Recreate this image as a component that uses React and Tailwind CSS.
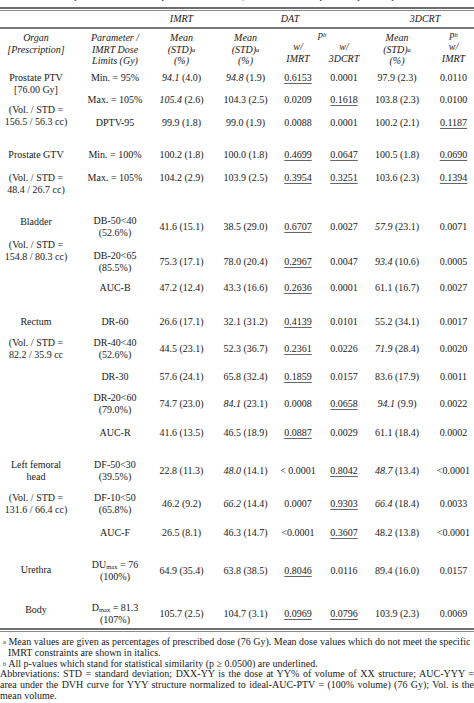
import React from 'react';

// Column classes for the seven value columns (after the organ column).
// Small paddings nudge each column's centre to where the printed table has it.
const COLS = [
  'w-[84px] pl-[2px]',
  'w-[56px] pr-[5px]',
  'w-[64px] pl-[3px]',
  'w-[44px]',
  'w-[48px]',
  'w-[58px]',
  'w-[48px] pl-[7px]',
];

// "*94.1* (4.0)" -> italic mean, "_0.6153_" -> underlined p-value
function fmt(v) {
  if (typeof v !== 'string') return v;
  if (v.startsWith('_')) {
    return (
      <span className="underline decoration-[#666] decoration-[1px] underline-offset-[2px]">
        {v.slice(1, -1)}
      </span>
    );
  }
  const m = v.match(/^\*(.+?)\*(.*)$/);
  if (m) {
    return (
      <>
        <i>{m[1]}</i>
        {m[2]}
      </>
    );
  }
  return v;
}

function Row({ cells, two, mt = '' }) {
  return (
    <div className={`flex ${two ? 'h-[24px]' : 'h-[12px]'} ${mt}`}>
      {cells.map((c, i) => (
        <div
          key={i}
          className={`${COLS[i]} flex items-center justify-center text-center whitespace-nowrap`}
        >
          <div className="leading-[12px]">{fmt(c)}</div>
        </div>
      ))}
    </div>
  );
}

function Group({ organ, rows, mt }) {
  return (
    <div className={`flex ${mt}`}>
      <div className="w-[72px] flex flex-col items-center text-center leading-[12px] whitespace-nowrap">
        {organ}
      </div>
      <div className="flex flex-col">
        {rows.map((r, i) => (
          <Row key={i} {...r} />
        ))}
      </div>
    </div>
  );
}

const two = (a, b) => (
  <>
    {a}
    <br />
    {b}
  </>
);

const Sup = ({ children }) => <sup className="text-[6.5px] relative -top-[1px]">{children}</sup>;
const Sub = ({ children }) => <sub className="text-[6.5px] relative top-[1px]">{children}</sub>;

export default function App() {
  return (
    <div className="w-[474px] h-[703px] overflow-hidden bg-white text-[#1a1a1a] text-[10px] font-['Liberation_Serif','Times_New_Roman',serif]">
      {/* caption line, mostly above the crop: only descenders show */}
      <div className="h-[4px] overflow-hidden">
        <div className="-mt-[10px] leading-[12px] pl-[20px] whitespace-nowrap">
          Table 3. Comparison of dosimetric parameters of IMRT, DAT and 3DCRT plans for prostate patients.
        </div>
      </div>

      {/* top double rule */}
      <div className="mt-[3px] h-[2px] bg-[#6e6e6e]" />
      <div className="mt-[1px] h-[1px] bg-[#8a8a8a]" />

      {/* technique header */}
      <div className="flex h-[16px] items-center italic leading-[12px]">
        <div className="w-[156px]" />
        <div className="w-[56px] pr-[5px] text-center">IMRT</div>
        <div className="w-[156px] text-center">DAT</div>
        <div className="w-[106px] pl-[8px] text-center">3DCRT</div>
      </div>
      <div className="h-[2px] bg-[#7a7a7a]" />

      {/* column header */}
      <div className="flex h-[37px] italic text-center whitespace-nowrap">
        <div className="w-[72px] pt-[3px] leading-[11.5px]">
          Organ
          <br />
          [Prescription]
        </div>
        <div className="w-[84px] pl-[2px] pt-[3px] leading-[11.5px]">
          Parameter /
          <br />
          IMRT Dose
          <br />
          Limits (Gy)
        </div>
        <div className="w-[56px] pr-[5px] pt-[3px] leading-[11.5px]">
          Mean
          <br />
          (STD)<Sup>a</Sup>
          <br />
          (%)
        </div>
        <div className="w-[64px] pl-[3px] pt-[3px] leading-[11.5px]">
          Mean
          <br />
          (STD)<Sup>a</Sup>
          <br />
          (%)
        </div>
        <div className="w-[92px] flex flex-col leading-[12px]">
          <div>
            p<Sup>b</Sup>
          </div>
          <div className="flex">
            <div className="w-[44px]">
              w/
              <br />
              IMRT
            </div>
            <div className="w-[48px]">
              w/
              <br />
              3DCRT
            </div>
          </div>
        </div>
        <div className="w-[58px] pt-[3px] leading-[11.5px]">
          Mean
          <br />
          (STD)<Sup>a</Sup>
          <br />
          (%)
        </div>
        <div className="w-[48px] pl-[7px] leading-[12px]">
          p<Sup>b</Sup>
          <br />
          w/
          <br />
          IMRT
        </div>
      </div>

      <Group
        mt="mt-[6px]"
        organ={
          <>
            <div>{two('Prostate PTV', '[76.00 Gy]')}</div>
            <div className="mt-[8px]">{two('(Vol. / STD =', '156.5 / 56.3 cc)')}</div>
          </>
        }
        rows={[
          { cells: ['Min. = 95%', '*94.1* (4.0)', '*94.8* (1.9)', '_0.6153_', '0.0001', '97.9 (2.3)', '0.0110'] },
          { mt: 'mt-[10px]', cells: ['Max. = 105%', '*105.4* (2.6)', '104.3 (2.5)', '0.0209', '_0.1618_', '103.8 (2.3)', '0.0100'] },
          { mt: 'mt-[11px]', cells: ['DPTV-95', '99.9 (1.8)', '99.0 (1.9)', '0.0088', '0.0001', '100.2 (2.1)', '_0.1187_'] },
        ]}
      />

      <Group
        mt="mt-[20px]"
        organ={
          <>
            <div>Prostate GTV</div>
            <div className="mt-[11px]">{two('(Vol. / STD =', '48.4 / 26.7 cc)')}</div>
          </>
        }
        rows={[
          { cells: ['Min. = 100%', '100.2 (1.8)', '100.0 (1.8)', '_0.4699_', '_0.0647_', '100.5 (1.8)', '_0.0690_'] },
          { mt: 'mt-[11px]', cells: ['Max. = 105%', '104.2 (2.9)', '103.9 (2.5)', '_0.3954_', '_0.3251_', '103.6 (2.3)', '_0.1394_'] },
        ]}
      />

      <Group
        mt="mt-[19px]"
        organ={
          <>
            <div className="mt-[1px]">Bladder</div>
            <div className="mt-[11px]">{two('(Vol. / STD =', '154.8 / 80.3 cc)')}</div>
          </>
        }
        rows={[
          { two: true, cells: [two('DB-50<40', '(52.6%)'), '41.6 (15.1)', '38.5 (29.0)', '_0.6707_', '0.0027', '*57.9* (23.1)', '0.0071'] },
          { two: true, mt: 'mt-[11px]', cells: [two('DB-20<65', '(85.5%)'), '75.3 (17.1)', '78.0 (20.4)', '_0.2967_', '0.0047', '*93.4* (10.6)', '0.0005'] },
          { mt: 'mt-[8px]', cells: ['AUC-B', '47.2 (12.4)', '43.3 (16.6)', '_0.2636_', '0.0001', '61.1 (16.7)', '0.0027'] },
        ]}
      />

      <Group
        mt="mt-[22px]"
        organ={
          <>
            <div>Rectum</div>
            <div className="mt-[9px]">{two('(Vol. / STD =', '82.2 / 35.9 cc')}</div>
          </>
        }
        rows={[
          { cells: ['DR-60', '26.6 (17.1)', '32.1 (31.2)', '_0.4139_', '0.0101', '55.2 (34.1)', '0.0017'] },
          { two: true, mt: 'mt-[9px]', cells: [two('DR-40<40', '(52.6%)'), '44.5 (23.1)', '52.3 (36.7)', '_0.2361_', '0.0226', '*71.9* (28.4)', '0.0020'] },
          { mt: 'mt-[10px]', cells: ['DR-30', '57.6 (24.1)', '65.8 (32.4)', '_0.1859_', '0.0157', '83.6 (17.9)', '0.0011'] },
          { two: true, mt: 'mt-[9px]', cells: [two('DR-20<60', '(79.0%)'), '74.7 (23.0)', '*84.1* (23.1)', '0.0008', '_0.0658_', '*94.1* (9.9)', '0.0022'] },
          { mt: 'mt-[11px]', cells: ['AUC-R', '41.6 (13.5)', '46.5 (18.9)', '_0.0887_', '0.0029', '61.1 (18.4)', '0.0002'] },
        ]}
      />

      <Group
        mt="mt-[20px]"
        organ={
          <>
            <div>{two('Left femoral', 'head')}</div>
            <div className="mt-[9px]">{two('(Vol. / STD =', '131.6 / 66.4 cc)')}</div>
          </>
        }
        rows={[
          { two: true, cells: [two('DF-50<30', '(39.5%)'), '22.8 (11.3)', '*48.0* (14.1)', '< 0.0001', '_0.8042_', '*48.7* (13.4)', '<0.0001'] },
          { two: true, mt: 'mt-[9px]', cells: [two('DF-10<50', '(65.8%)'), '46.2 (9.2)', '*66.2* (14.4)', '0.0007', '_0.9303_', '*66.4* (18.4)', '0.0033'] },
          { mt: 'mt-[11px]', cells: ['AUC-F', '26.5 (8.1)', '46.3 (14.7)', '<0.0001', '_0.3607_', '48.2 (13.8)', '<0.0001'] },
        ]}
      />

      <Group
        mt="mt-[20px]"
        organ={<div className="mt-[5px]">Urethra</div>}
        rows={[
          {
            two: true,
            cells: [
              <>
                DU<Sub>max</Sub> = 76
                <br />
                (100%)
              </>,
              '64.9 (35.4)',
              '63.8 (38.5)',
              '_0.8046_',
              '0.0116',
              '89.4 (16.0)',
              '0.0157',
            ],
          },
        ]}
      />

      <Group
        mt="mt-[19px]"
        organ={<div className="mt-[2px]">Body</div>}
        rows={[
          {
            two: true,
            cells: [
              <>
                D<Sub>max</Sub> = 81.3
                <br />
                (107%)
              </>,
              '105.7 (2.5)',
              '104.7 (3.1)',
              '_0.0969_',
              '_0.0796_',
              '103.9 (2.3)',
              '0.0069',
            ],
          },
        ]}
      />

      {/* bottom double rule */}
      <div className="mt-[2px] h-[2px] bg-[#6e6e6e]" />
      <div className="mt-[1px] h-[1px] bg-[#8a8a8a]" />

      {/* footnotes */}
      <div className="mt-[5px] leading-[10.8px] whitespace-nowrap overflow-hidden">
        <div className="pl-[3px]">
          <Sup>a</Sup> Mean values are given as percentages of prescribed dose (76 Gy). Mean dose values which do not meet the specific
        </div>
        <div className="pl-[8px]">IMRT constraints are shown in italics.</div>
        <div className="pl-[3px]">
          <Sup>b</Sup> All p-values which stand for statistical similarity (p ≥ 0.0500) are underlined.
        </div>
        <div className="text-justify [text-align-last:justify]">
          Abbreviations: STD = standard deviation; DXX-YY is the dose at YY% of volume of XX structure; AUC-YYY =
        </div>
        <div className="text-justify [text-align-last:justify]">
          area under the DVH curve for YYY structure normalized to ideal-AUC-PTV = (100% volume) (76 Gy); Vol. is the
        </div>
        <div>mean volume.</div>
      </div>
    </div>
  );
}
